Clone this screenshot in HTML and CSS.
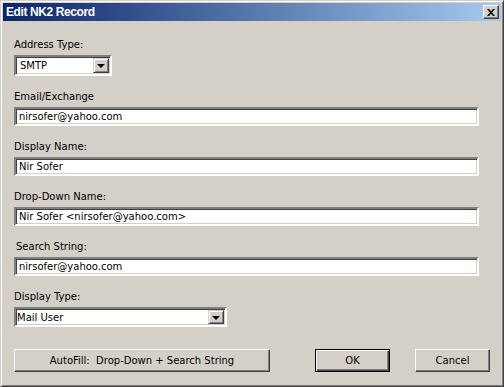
FILE: index.html
```html
<!DOCTYPE html>
<html lang="en">
<head>
    <meta charset="UTF-8">
    <title>Edit NK2 Record</title>
    <link rel="stylesheet" href="styles.css">
</head>
<body>

<div class="window">
    <div class="titlebar">
        <span class="title">Edit NK2 Record</span>
        <button class="close" title="Close">
            <svg width="8" height="7" viewBox="0 0 8 7">
                <path d="M0 0h2l2 2.3L6 0h2L5 3.5 8 7H6L4 4.7 2 7H0l3-3.5z" fill="#000"/>
            </svg>
        </button>
    </div>

    <div class="content">
        <div class="label">Address Type:</div>
        <div class="combo small">
            <span class="value">SMTP</span>
            <span class="drop"><i class="arrow"></i></span>
        </div>

        <div class="label">Email/Exchange</div>
        <input class="field" type="text" value="nirsofer@yahoo.com">

        <div class="label">Display Name:</div>
        <input class="field" type="text" value="Nir Sofer">

        <div class="label">Drop-Down Name:</div>
        <input class="field" type="text" value="Nir Sofer <nirsofer@yahoo.com>">

        <div class="label shifted">Search String:</div>
        <input class="field" type="text" value="nirsofer@yahoo.com">

        <div class="label">Display Type:</div>
        <div class="combo wide flush">
            <span class="value">Mail User</span>
            <span class="drop"><i class="arrow"></i></span>
        </div>

        <div class="buttons">
            <button class="btn autofill">AutoFill:&nbsp; Drop-Down + Search String</button>
            <button class="btn default">OK</button>
            <button class="btn">Cancel</button>
        </div>
    </div>
</div>

</body>
</html>
```

FILE: styles.css
```css
* {
    box-sizing: border-box;
}

body {
    margin: 0;
    padding: 0;
    background-color: #d4d0c8;
    font-family: "DejaVu Sans", Verdana, sans-serif;
    font-size: 10px;
    color: #000;
}

.window {
    width: 504px;
    height: 387px;
    padding: 2px;
    background-color: #d4d0c8;
    border: 1px solid;
    border-color: #d4d0c8 #404040 #404040 #d4d0c8;
    box-shadow: inset 1px 1px #fff, inset -1px -1px #808080;
}

/* title bar */
.titlebar {
    display: flex;
    align-items: center;
    justify-content: space-between;
    height: 18px;
    padding: 0 2px;
    background: linear-gradient(to right, #0a246a, #a6caf0);
}

.title {
    color: #fff;
    font-family: "Liberation Sans", Arial, sans-serif;
    font-weight: bold;
    font-size: 12px;
    letter-spacing: -0.4px;
    padding-left: 1px;
}

.close {
    display: flex;
    align-items: center;
    justify-content: center;
    width: 16px;
    height: 14px;
    padding: 0;
    background-color: #d4d0c8;
    border: 1px solid;
    border-color: #fff #404040 #404040 #fff;
    box-shadow: inset -1px -1px #808080;
}

/* form */
.content {
    display: flex;
    flex-direction: column;
    align-items: flex-start;
    padding: 17px 22px 0 11px;
}

.label {
    line-height: 13px;
    height: 13px;
    margin-bottom: 4px;
}

.label.shifted {
    padding-left: 2px;
}

.field,
.combo {
    background-color: #fff;
    border: 2px solid;
    border-color: #808080 #fff #fff #808080;
    box-shadow: inset 1px 1px #404040, inset -1px -1px #d4d0c8;
    margin-bottom: 14px;
}

.field {
    width: 100%;
    height: 19px;
    padding: 0 0 0 3px;
    font-family: inherit;
    font-size: 10px;
    color: #000;
    outline: none;
}

.combo {
    display: flex;
    align-items: center;
    height: 21px;
    padding: 1px;
}

.combo.small {
    width: 98px;
}

.combo.wide {
    width: 213px;
    height: 20px;
}

.combo .value {
    flex: 1;
    padding-left: 3px;
}

.combo.flush .value {
    padding-left: 0;
}

.combo .drop {
    display: flex;
    align-items: center;
    justify-content: center;
    width: 16px;
    height: 100%;
    background-color: #d4d0c8;
    border: 1px solid;
    border-color: #d4d0c8 #404040 #404040 #d4d0c8;
    box-shadow: inset 1px 1px #fff, inset -1px -1px #808080;
}

.arrow {
    width: 0;
    height: 0;
    border-left: 4px solid transparent;
    border-right: 4px solid transparent;
    border-top: 4px solid #000;
    margin-top: 1px;
}

/* buttons */
.buttons {
    display: flex;
    gap: 25px;
    margin-top: 8px;
}

.btn {
    width: 75px;
    height: 23px;
    padding: 0;
    font-family: inherit;
    font-size: 10px;
    color: #000;
    background-color: #d4d0c8;
    border: 1px solid;
    border-color: #fff #404040 #404040 #fff;
    box-shadow: inset -1px -1px #808080;
}

.btn.autofill {
    width: 256px;
    margin-right: 20px;
}

.btn.default {
    border: 1px solid #000;
    box-shadow: inset 1px 1px #fff, inset -1px -1px #404040, inset -2px -2px #808080;
}
```
